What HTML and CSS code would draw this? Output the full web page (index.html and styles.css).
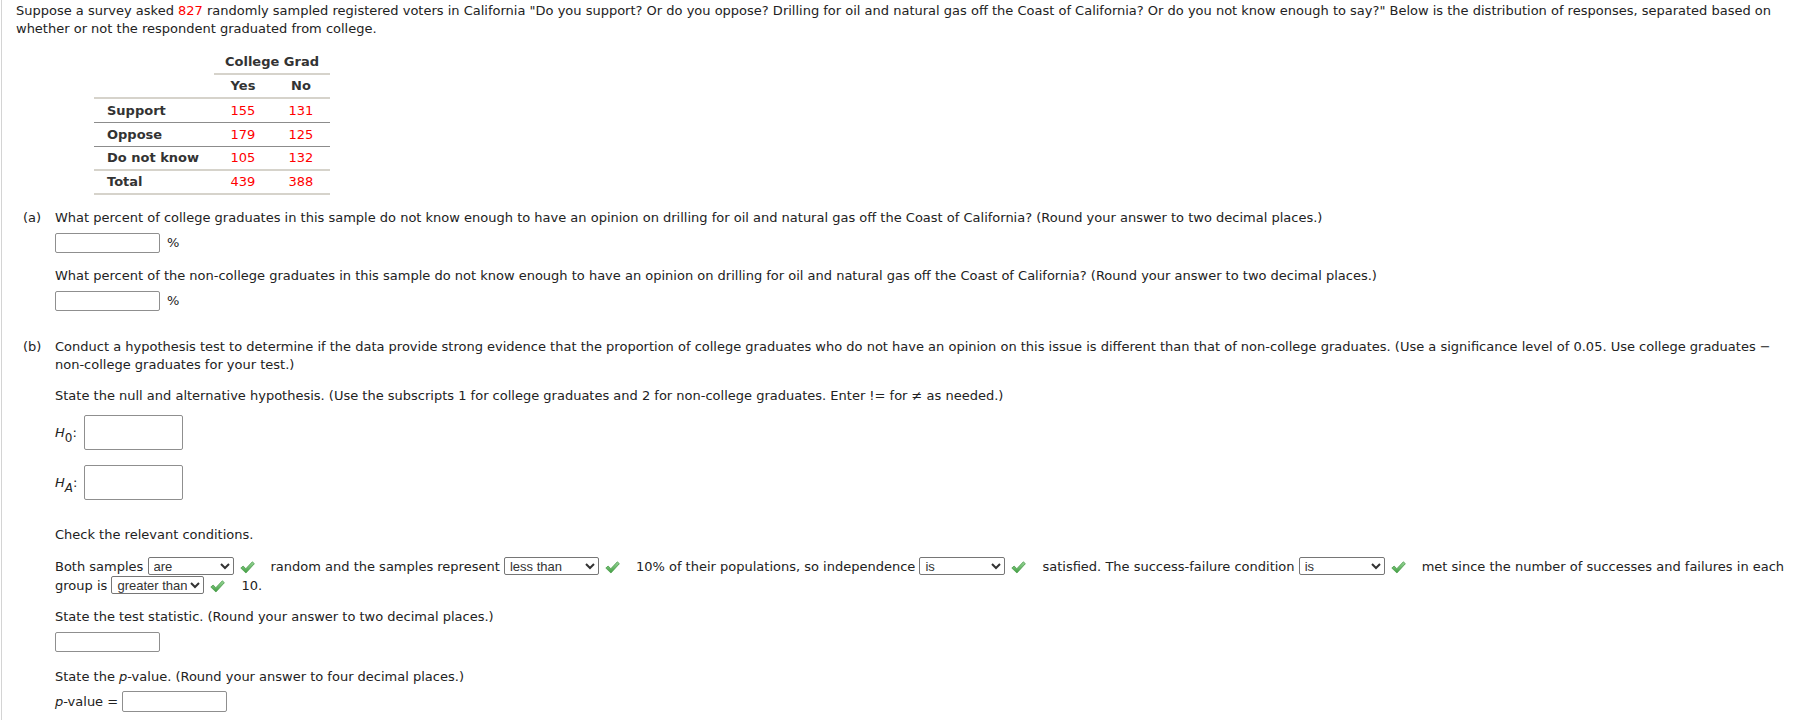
FILE: index.html
```html
<!DOCTYPE html>
<html lang="en">
<head>
<meta charset="utf-8">
<title>Hypothesis test question</title>
<link rel="stylesheet" href="styles.css">
</head>
<body>
<div class="page">
  <p class="intro">Suppose a survey asked <span class="red">827</span> randomly sampled registered voters in California "Do you support? Or do you oppose? Drilling for oil and natural gas off the Coast of California? Or do you not know enough to say?" Below is the distribution of responses, separated based on whether or not the respondent graduated from college.</p>

  <table class="data">
    <tr class="r-top"><td class="lab"></td><th colspan="2" class="grp">College Grad</th></tr>
    <tr class="r-head"><td class="lab"></td><th class="num">Yes</th><th class="num">No</th></tr>
    <tr class="r-dark"><td class="lab">Support</td><td class="num red">155</td><td class="num red">131</td></tr>
    <tr class="r-dark"><td class="lab">Oppose</td><td class="num red">179</td><td class="num red">125</td></tr>
    <tr class="r-light"><td class="lab">Do not know</td><td class="num red">105</td><td class="num red">132</td></tr>
    <tr class="r-light"><td class="lab">Total</td><td class="num red">439</td><td class="num red">388</td></tr>
  </table>

  <div class="part part-a">
    <div class="plabel">(a)</div>
    <div class="pbody">
      <p class="q">What percent of college graduates in this sample do not know enough to have an opinion on drilling for oil and natural gas off the Coast of California? (Round your answer to two decimal places.)</p>
      <div class="ans"><input class="box" type="text"><span class="unit">%</span></div>
      <p class="q q-next">What percent of the non-college graduates in this sample do not know enough to have an opinion on drilling for oil and natural gas off the Coast of California? (Round your answer to two decimal places.)</p>
      <div class="ans"><input class="box" type="text"><span class="unit">%</span></div>
    </div>
  </div>

  <div class="part part-b">
    <div class="plabel">(b)</div>
    <div class="pbody">
      <p class="q">Conduct a hypothesis test to determine if the data provide strong evidence that the proportion of college graduates who do not have an opinion on this issue is different than that of non-college graduates. (Use a significance level of 0.05. Use college graduates − non-college graduates for your test.)</p>
      <p class="q q-null">State the null and alternative hypothesis. (Use the subscripts 1 for college graduates and 2 for non-college graduates. Enter != for ≠ as needed.)</p>
      <div class="hyp hyp-0"><span class="hl"><i>H</i><sub>0</sub>:</span><input class="hbox" type="text"></div>
      <div class="hyp hyp-a"><span class="hl"><i>H</i><sub><i>A</i></sub>:</span><input class="hbox" type="text"></div>

      <p class="q q-check">Check the relevant conditions.</p>
      <p class="cond">Both samples <select class="sel s-are"><option>are</option></select><svg class="ok" viewBox="0 0 16 14" width="15" height="13"><defs><linearGradient id="g1" x1="0" y1="0" x2="0" y2="1"><stop offset="0" stop-color="#9ad69a"/><stop offset="1" stop-color="#3f9e3f"/></linearGradient></defs><path d="M0.8 7.6 L3.3 5.4 L6.2 8.3 L13.2 0.9 L15.4 2.9 L6.3 12.9 Z" fill="url(#g1)" stroke="#4f9f4f" stroke-width="0.9" stroke-linejoin="round"/></svg>random and the samples represent <select class="sel s-less"><option>less than</option></select><svg class="ok" viewBox="0 0 16 14" width="15" height="13"><path d="M0.8 7.6 L3.3 5.4 L6.2 8.3 L13.2 0.9 L15.4 2.9 L6.3 12.9 Z" fill="url(#g1)" stroke="#4f9f4f" stroke-width="0.9" stroke-linejoin="round"/></svg>10% of their populations, so independence <select class="sel s-is"><option>is</option></select><svg class="ok" viewBox="0 0 16 14" width="15" height="13"><path d="M0.8 7.6 L3.3 5.4 L6.2 8.3 L13.2 0.9 L15.4 2.9 L6.3 12.9 Z" fill="url(#g1)" stroke="#4f9f4f" stroke-width="0.9" stroke-linejoin="round"/></svg>satisfied. The success-failure condition <select class="sel s-is"><option>is</option></select><svg class="ok" viewBox="0 0 16 14" width="15" height="13"><path d="M0.8 7.6 L3.3 5.4 L6.2 8.3 L13.2 0.9 L15.4 2.9 L6.3 12.9 Z" fill="url(#g1)" stroke="#4f9f4f" stroke-width="0.9" stroke-linejoin="round"/></svg>met since the number of successes and failures in each group is <select class="sel s-gt"><option>greater than</option></select><svg class="ok" viewBox="0 0 16 14" width="15" height="13"><path d="M0.8 7.6 L3.3 5.4 L6.2 8.3 L13.2 0.9 L15.4 2.9 L6.3 12.9 Z" fill="url(#g1)" stroke="#4f9f4f" stroke-width="0.9" stroke-linejoin="round"/></svg>10.</p>

      <p class="q q-stat">State the test statistic. (Round your answer to two decimal places.)</p>
      <div class="ans"><input class="box" type="text"></div>

      <p class="q q-pv">State the <i>p</i>-value. (Round your answer to four decimal places.)</p>
      <div class="ans ans-pv"><span class="pv"><i>p</i>-value =</span><input class="box" type="text"></div>
    </div>
  </div>
</div>
</body>
</html>
```

FILE: styles.css
```css
html, body {
  margin: 0;
  padding: 0;
  background: #ffffff;
}

body {
  font-family: "DejaVu Sans", Verdana, sans-serif;
  font-size: 13px;
  line-height: 18px;
  color: #222222;
}

.page {
  margin-left: 1px;
  border-left: 1px solid #d4d4d4;
  padding: 2px 14px 0 14px;
  min-height: 720px;
  box-sizing: border-box;
}

.intro {
  margin: 0;
}

.red {
  color: #ff0000;
}

/* data table */
.data {
  border-collapse: collapse;
  margin: 13px 0 0 78px;
  color: #333333;
}

.data td,
.data th {
  padding: 0;
  line-height: 18px;
  vertical-align: middle;
}

.data .lab {
  width: 107px;
  padding-left: 13px;
  text-align: left;
  font-weight: bold;
}

.data .num {
  width: 58px;
  text-align: center;
  font-weight: normal;
}

.data th.num {
  font-weight: bold;
}

.data td.red {
  color: #ff0000;
}

.data .grp {
  font-weight: bold;
  text-align: center;
  border-bottom: 2px solid #d6d3cb;
}

.data .r-top td,
.data .r-top th {
  height: 22px;
}

.data .r-head td,
.data .r-head th {
  height: 22px;
  border-bottom: 2px solid #d6d3cb;
}

.data .r-dark td {
  height: 23px;
  border-bottom: 1px solid #8c8c8c;
}

.data .r-light td {
  height: 22px;
  border-bottom: 2px solid #d6d3cb;
}

/* parts */
.part {
  display: flex;
  align-items: flex-start;
}

.part-a {
  margin-top: 14px;
}

.part-b {
  margin-top: 27px;
}

.plabel {
  width: 32px;
  margin-left: 7px;
  flex: none;
}

.pbody {
  flex: 1;
  min-width: 0;
}

.q {
  margin: 0;
}

.q-next {
  margin-top: 14px;
}

.q-null {
  margin-top: 13px;
}

.q-check {
  margin-top: 26px;
}

.q-stat {
  margin-top: 13px;
}

.q-pv {
  margin-top: 16px;
}

.ans {
  display: flex;
  align-items: center;
  margin-top: 6px;
  height: 20px;
}

.ans-pv {
  margin-top: 5px;
  height: 21px;
}

.box {
  box-sizing: border-box;
  width: 105px;
  height: 20px;
  margin: 0;
  padding: 0 3px;
  border: 1px solid #8f8f8f;
  border-radius: 2px;
  background: #ffffff;
  font: 13px "DejaVu Sans", Verdana, sans-serif;
}

.ans-pv .box {
  height: 21px;
}

.unit {
  margin-left: 7px;
}

.pv {
  margin-right: 4px;
}

.hyp {
  display: flex;
  align-items: center;
}

.hyp-0 {
  margin-top: 10px;
}

.hyp-a {
  margin-top: 15px;
}

.hl {
  width: 29px;
  flex: none;
}

.hl sub {
  font-size: 12px;
  line-height: 0;
  vertical-align: -5px;
}

.hbox {
  box-sizing: border-box;
  width: 99px;
  height: 35px;
  margin: 0;
  border: 1px solid #8f8f8f;
  border-radius: 2px;
  background: #ffffff;
}

/* conditions */
.cond {
  margin: 13px 0 0 0;
  line-height: 19px;
}

.sel {
  box-sizing: border-box;
  height: 18px;
  margin: 0;
  padding: 0 0 0 1px;
  border: 1px solid #767676;
  border-radius: 2px;
  background: #ffffff;
  color: #333333;
  font: 13px "Liberation Sans", Arial, sans-serif;
  vertical-align: top;
}

.s-are,
.s-is {
  width: 86px;
}

.s-less {
  width: 95px;
}

.s-gt {
  width: 93px;
}

.ok {
  display: inline-block;
  vertical-align: -3px;
  margin: 0 16px 0 6px;
}
```
